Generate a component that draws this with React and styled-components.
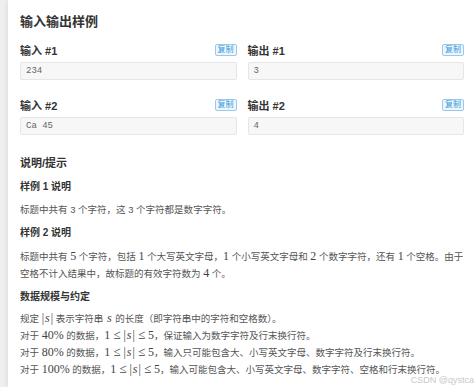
import styled, { createGlobalStyle } from "styled-components";

const GlobalStyle = createGlobalStyle`
  html, body {
    margin: 0;
    padding: 0;
    background: #efefef;
  }
  body {
    font-family: "Liberation Sans", "Noto Sans CJK SC", sans-serif;
  }
`;

const samples = [
  { input: "234", output: "3" },
  { input: "Ca 45", output: "4" },
];

// |s| ≤ 5 style constraint, rendered like KaTeX
function Bound() {
  return (
    <M>
      1<Rel>≤</Rel>|<i>s</i>|<Rel>≤</Rel>5
    </M>
  );
}

function App() {
  return (
    <>
      <GlobalStyle />
      <Card>
        <Title>输入输出样例</Title>
        <SampleGrid>
          {samples.map((s, i) => (
            <SampleRow key={i}>
              <Sample>
                <SampleHead>
                  <Label>输入 #{i + 1}</Label>
                  <CopyButton>复制</CopyButton>
                </SampleHead>
                <CodeBox>{s.input}</CodeBox>
              </Sample>
              <Sample>
                <SampleHead>
                  <Label>输出 #{i + 1}</Label>
                  <CopyButton>复制</CopyButton>
                </SampleHead>
                <CodeBox>{s.output}</CodeBox>
              </Sample>
            </SampleRow>
          ))}
        </SampleGrid>

        <Section>说明/提示</Section>
        <SubHead>样例 1 说明</SubHead>
        <Para>标题中共有 3 个字符，这 3 个字符都是数字字符。</Para>
        <SubHead>样例 2 说明</SubHead>
        <Para $gap="7px">
          标题中共有 <M>5</M> 个字符，包括 <M>1</M> 个大写英文字母，<M>1</M>{" "}
          个小写英文字母和 <M>2</M> 个数字字符，还有 <M>1</M> 个空格。由于空格不计入结果中，故标题的有效字符数为{" "}
          <M>4</M> 个。
        </Para>
        <SubHead>数据规模与约定</SubHead>
        <Para $gap="5px">
          规定 <M>|<i>s</i>|</M> 表示字符串 <M><i>s</i></M> 的长度（即字符串中的字符和空格数）。
          <br />
          对于 <M>40%</M> 的数据，<Bound />，保证输入为数字字符及行末换行符。
          <br />
          对于 <M>80%</M> 的数据，<Bound />，输入只可能包含大、小写英文字母、数字字符及行末换行符。
          <br />
          对于 <M>100%</M> 的数据，<Bound />，输入可能包含大、小写英文字母、数字字符、空格和行末换行符。
        </Para>
        <Watermark>CSDN @qystca</Watermark>
      </Card>
    </>
  );
}

export default App;

const Card = styled.div`
  position: relative;
  margin-left: 8px;
  min-height: 387px;
  box-sizing: border-box;
  padding: 13px 10px 0 12px;
  background: #fff;
  box-shadow: -2px 0 4px rgba(0, 0, 0, 0.06);
`;

const Title = styled.h2`
  margin: 0;
  font-size: 13px;
  line-height: 18px;
  font-weight: bold;
  color: #333;
`;

const SampleGrid = styled.div`
  margin-top: 11px;
  display: flex;
  flex-direction: column;
  gap: 17px;
`;

const SampleRow = styled.div`
  display: grid;
  grid-template-columns: 1fr 1fr;
  column-gap: 11px;
`;

const Sample = styled.div`
  display: flex;
  flex-direction: column;
  gap: 4px;
`;

const SampleHead = styled.div`
  display: flex;
  justify-content: space-between;
  align-items: center;
  height: 16px;
`;

const Label = styled.span`
  font-size: 11px;
  font-weight: bold;
  color: #333;
`;

const CopyButton = styled.span`
  font-size: 8px;
  line-height: 10px;
  padding: 0 2px;
  color: #3498db;
  background: #eef6fd;
  border: 1px solid #9cc8ec;
  border-radius: 2px;
`;

const CodeBox = styled.div`
  height: 18px;
  box-sizing: border-box;
  padding: 0 5px;
  display: flex;
  align-items: center;
  font-family: "Liberation Mono", "DejaVu Sans Mono", monospace;
  font-size: 9px;
  color: #666;
  background: #f7f7f7;
  border: 1px solid #e6e6e6;
  border-radius: 2px;
`;

const Section = styled.h3`
  margin: 19px 0 0;
  font-size: 11px;
  line-height: 18px;
  font-weight: bold;
  color: #333;
`;

const SubHead = styled.h4`
  margin: 7px 0 0;
  font-size: 10px;
  line-height: 16px;
  font-weight: bold;
  color: #333;
`;

const Para = styled.p`
  margin: ${(p) => p.$gap || "6px"} 0 0;
  font-size: 9.5px;
  line-height: 17px;
  color: #555;
`;

const M = styled.span`
  font-family: "Liberation Serif", "DejaVu Serif", serif;
  font-size: 12px;
  line-height: 1;
  color: #444;
  white-space: nowrap;

  i {
    font-style: italic;
    padding: 0 1px;
  }
`;

const Rel = styled.span`
  margin: 0 3px;
  font-size: 13px;
`;

const Watermark = styled.span`
  position: absolute;
  right: 0;
  bottom: 2px;
  font-size: 9px;
  color: #c8c8c8;
`;
